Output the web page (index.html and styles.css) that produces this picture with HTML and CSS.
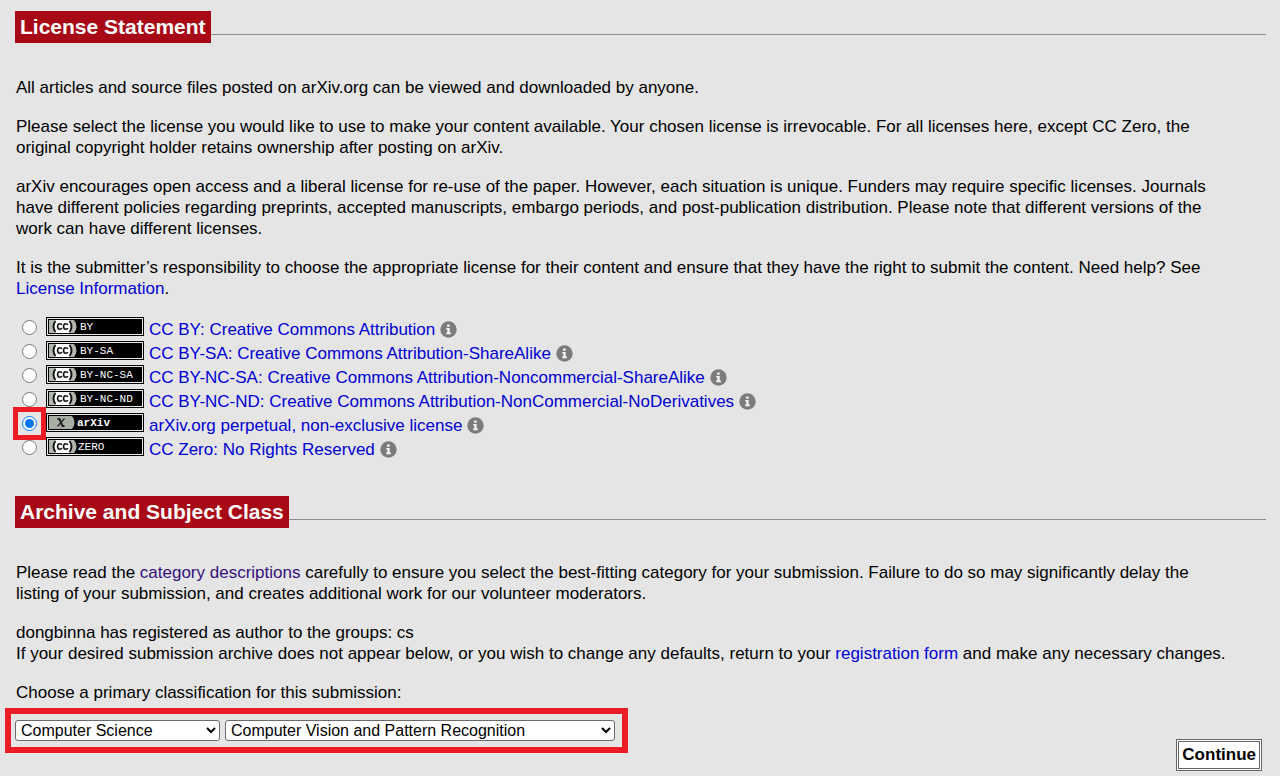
FILE: index.html
```html
<!DOCTYPE html>
<html lang="en">
<head>
<meta charset="UTF-8">
<meta name="viewport" content="width=device-width, initial-scale=1.0">
<title>Submit - arXiv.org</title>
<link rel="stylesheet" href="styles.css">
</head>
<body>

<!-- shared icon shapes -->
<svg class="defs" width="0" height="0" aria-hidden="true">
    <symbol id="info" viewBox="0 0 17 17">
        <circle cx="8.5" cy="8.5" r="8.2" fill="#7c7c7c"/>
        <path d="M7.1 3.4h2.6v2.3H7.1zM6.2 6.9h3.5v4.5h1.2v1.8H6.2v-1.8h1.1V8.6H6.2z" fill="#f4f4f4"/>
    </symbol>
    <symbol id="badge" viewBox="0 0 98 19">
        <rect width="98" height="19" fill="#000"/>
        <rect x="1.5" y="1.5" width="95" height="16" fill="#000" stroke="#e8e8e4" stroke-width="1"/>
    </symbol>
    <symbol id="cc" viewBox="0 0 98 19">
        <use href="#badge"/>
        <path d="M3 3H28Q33 9.500 28 16H3z" fill="#b2b7ae"/>
        <path d="M10 3H23Q29 9.500 23 16H10Q4 9.500 10 3z" fill="#fff"/>
        <path d="M9.500 4Q5.500 9.500 9.500 15M23.500 4Q27.500 9.500 23.500 15" fill="none" stroke="#111" stroke-width="1.800"/>
        <path d="M15.800 8Q15.300 6.700 13.800 6.700Q11.600 6.700 11.600 9.500T13.800 12.300Q15.300 12.300 15.800 11M21.800 8Q21.300 6.700 19.800 6.700Q17.600 6.700 17.600 9.500T19.800 12.300Q21.300 12.300 21.800 11" fill="none" stroke="#111" stroke-width="1.600"/>
    </symbol>
    <symbol id="arxiv" viewBox="0 0 98 19">
        <use href="#badge"/>
        <path d="M3 3H26Q31 9.500 26 16H3z" fill="#a8aea4"/>
        <path d="M11.500 6h2l3 7h2" fill="none" stroke="#222" stroke-width="2"/>
        <path d="M18.500 5.500l-7 8" fill="none" stroke="#222" stroke-width="1.200"/>
    </symbol>
</svg>

<form action="#" method="post">
    <section>
        <h2><span>License Statement</span></h2>
        <p>All articles and source files posted on arXiv.org can be viewed and downloaded by anyone.</p>
        <p>Please select the license you would like to use to make your content available. Your chosen license is irrevocable. For all licenses here, except CC Zero, the original copyright holder retains ownership after posting on arXiv.</p>
        <p>arXiv encourages open access and a liberal license for re-use of the paper. However, each situation is unique. Funders may require specific licenses. Journals have different policies regarding preprints, accepted manuscripts, embargo periods, and post-publication distribution. Please note that different versions of the work can have different licenses.</p>
        <p>It is the submitter’s responsibility to choose the appropriate license for their content and ensure that they have the right to submit the content. Need help? See <a href="#">License Information</a>.</p>

        <ul class="licenses">
            <li>
                <span class="pick"><input type="radio" name="license" id="by" aria-labelledby="by-name"></span>
                <label for="by"><svg class="badge" viewBox="0 0 98 19"><use href="#cc"/><text x="34" y="13">BY</text></svg></label>
                <a href="#" id="by-name">CC BY: Creative Commons Attribution</a>
                <svg class="info"><use href="#info"/></svg>
            </li>
            <li>
                <span class="pick"><input type="radio" name="license" id="by-sa" aria-labelledby="by-sa-name"></span>
                <label for="by-sa"><svg class="badge" viewBox="0 0 98 19"><use href="#cc"/><text x="34" y="13">BY-SA</text></svg></label>
                <a href="#" id="by-sa-name">CC BY-SA: Creative Commons Attribution-ShareAlike</a>
                <svg class="info"><use href="#info"/></svg>
            </li>
            <li>
                <span class="pick"><input type="radio" name="license" id="by-nc-sa" aria-labelledby="by-nc-sa-name"></span>
                <label for="by-nc-sa"><svg class="badge" viewBox="0 0 98 19"><use href="#cc"/><text x="34" y="13">BY-NC-SA</text></svg></label>
                <a href="#" id="by-nc-sa-name">CC BY-NC-SA: Creative Commons Attribution-Noncommercial-ShareAlike</a>
                <svg class="info"><use href="#info"/></svg>
            </li>
            <li>
                <span class="pick"><input type="radio" name="license" id="by-nc-nd" aria-labelledby="by-nc-nd-name"></span>
                <label for="by-nc-nd"><svg class="badge" viewBox="0 0 98 19"><use href="#cc"/><text x="34" y="13">BY-NC-ND</text></svg></label>
                <a href="#" id="by-nc-nd-name">CC BY-NC-ND: Creative Commons Attribution-NonCommercial-NoDerivatives</a>
                <svg class="info"><use href="#info"/></svg>
            </li>
            <li>
                <span class="pick marked"><input type="radio" name="license" id="arxiv-lic" aria-labelledby="arxiv-name" checked></span>
                <label for="arxiv-lic"><svg class="badge" viewBox="0 0 98 19"><use href="#arxiv"/><text class="bold" x="31" y="13">arXiv</text></svg></label>
                <a href="#" id="arxiv-name">arXiv.org perpetual, non-exclusive license</a>
                <svg class="info"><use href="#info"/></svg>
            </li>
            <li>
                <span class="pick"><input type="radio" name="license" id="zero" aria-labelledby="zero-name"></span>
                <label for="zero"><svg class="badge" viewBox="0 0 98 19"><use href="#cc"/><text x="32" y="13">ZERO</text></svg></label>
                <a href="#" id="zero-name">CC Zero: No Rights Reserved</a>
                <svg class="info"><use href="#info"/></svg>
            </li>
        </ul>
    </section>

    <section>
        <h2><span>Archive and Subject Class</span></h2>
        <p>Please read the <a href="#" class="seen">category descriptions</a> carefully to ensure you select the best-fitting category for your submission. Failure to do so may significantly delay the listing of your submission, and creates additional work for our volunteer moderators.</p>
        <p>dongbinna has registered as author to the groups: cs<br>
        If your desired submission archive does not appear below, or you wish to change any defaults, return to your <a href="#">registration form</a> and make any necessary changes.</p>
        <p><label for="archive">Choose a primary classification for this submission:</label></p>

        <div class="bottom">
            <div class="selects">
                <select id="archive" class="archive">
                    <option>Computer Science</option>
                </select>
                <select id="subject" class="subject" aria-label="Subject class">
                    <option>Computer Vision and Pattern Recognition</option>
                </select>
            </div>
            <button type="submit">Continue</button>
        </div>
    </section>
</form>

</body>
</html>
```
FILE: styles.css
```css
body {
  margin: 0;
  padding: 11px 14px 0 15px;
  background-color: #e5e5e5;
  color: #000;
  font-family: Arial, "Liberation Sans", sans-serif;
  font-size: 17px;
  line-height: 21px;
}

.defs {
  position: absolute;
}

a {
  color: #0000d4;
  text-decoration: none;
}

a:hover {
  text-decoration: underline;
}

a.seen {
  color: #34107c;
}

h2 {
  display: flex;
  align-items: flex-start;
  margin: 0 0 34px;
  font-size: 21px;
  line-height: 24px;
}

h2 span {
  padding: 4px 5px;
  background-color: #a80916;
  color: #fff;
}

/* rule to the right of the heading */
h2::after {
  content: "";
  flex: 1;
  margin-top: 23px;
  border-top: 1px solid #8c8c8c;
}

p {
  margin: 0 0 18px;
  padding: 0 30px 0 1px;
}

.licenses {
  list-style: none;
  margin: 0 0 35px;
  padding: 0;
}

.licenses li {
  display: flex;
  align-items: center;
  height: 24px;
}

.pick {
  position: relative;
  display: flex;
  margin: 0 9px 4px 7px;
}

.pick input {
  width: 15px;
  height: 15px;
  margin: 0;
}

/* red frame around the chosen license */
.marked::after {
  content: "";
  position: absolute;
  inset: -9px;
  border: 5px solid #ed1c24;
  pointer-events: none;
}

.badge {
  display: block;
  width: 98px;
  height: 19px;
  margin: 0 5px 5px 0;
}

.badge text {
  fill: #fff;
  font-family: "Liberation Mono", monospace;
  font-size: 11px;
}

.badge .bold {
  font-weight: bold;
}

.info {
  width: 17px;
  height: 17px;
  margin-left: 5px;
}

.bottom {
  display: flex;
  justify-content: space-between;
  align-items: flex-start;
  margin: -13px 4px 0 -10px;
}

.selects {
  display: flex;
  gap: 5px;
  padding: 6px 7px 6px 4px;
  border: 6px solid #ed1c24;
}

select {
  height: 21px;
  padding: 0 4px 0 1px;
  border: 1px solid #6b6b6b;
  border-radius: 3px;
  background-color: #fff;
  color: #000;
  font-family: inherit;
  font-size: 16px;
}

.archive {
  width: 205px;
}

.subject {
  width: 390px;
}

button {
  margin-top: 31px;
  padding: 3px;
  border: 3px double #666;
  background-color: #fff;
  color: #000;
  font-family: inherit;
  font-size: 17px;
  font-weight: bold;
  line-height: 20px;
}
```
